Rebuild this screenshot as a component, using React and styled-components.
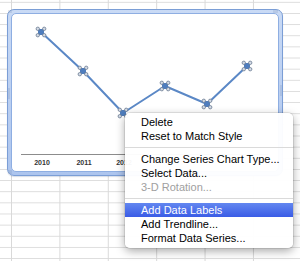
import React from "react";
import styled, { createGlobalStyle } from "styled-components";

const GlobalStyle = createGlobalStyle`
  html, body {
    margin: 0;
    padding: 0;
    background: #fff;
    overflow: hidden;
  }
  body {
    font-family: "Liberation Sans", Arial, sans-serif;
  }
`;

export const Sheet = styled.div`
  position: relative;
  width: 300px;
  height: 261px;
  box-sizing: border-box;
  padding: 9px 0 0 7px;
  overflow: hidden;
  background-color: #fff;
  background-image: linear-gradient(to right, #d9d9d9 1px, transparent 1px),
    linear-gradient(to bottom, #dcdcdc 1px, transparent 1px);
  background-size: 48.4px 100%, 100% 11.15px;
  background-position: 11px 0, 0 1.85px;
`;

export const ChartFrame = styled.div`
  position: relative;
  width: 276px;
  height: 167px;
  box-sizing: border-box;
  border: 1px solid #7b9ed6;
  border-radius: 7px;
  background: linear-gradient(to bottom, #c9daf5, #adc5ee);
  padding: 3px;
  box-shadow: 0 1px 1px rgba(60, 90, 140, 0.2);
`;

export const PlotArea = styled.div`
  width: 100%;
  height: 100%;
  box-sizing: border-box;
  border: 1px solid #8eaee2;
  border-radius: 5px;
  background: #fff;
  overflow: hidden;
`;

export const Grip = styled.span`
  position: absolute;
  left: ${(p) => p.$x}px;
  top: ${(p) => p.$y}px;
  width: ${(p) => p.$w}px;
  height: ${(p) => p.$h}px;
  background-image: radial-gradient(circle, #6a7fa3 0.55px, transparent 0.75px);
  background-size: 2px 2px;
  opacity: 0.85;
`;

export const Menu = styled.ul`
  position: absolute;
  left: 125px;
  top: 113px;
  width: 168px;
  box-sizing: border-box;
  margin: 0;
  padding: 2px 0 3px;
  list-style: none;
  background: rgba(255, 255, 255, 0.96);
  border-radius: 5px;
  box-shadow: 0 0 0 1px rgba(0, 0, 0, 0.08), 0 3px 10px rgba(0, 0, 0, 0.35);
`;

export const MenuItem = styled.li`
  height: 14px;
  line-height: 14px;
  padding-left: 16px;
  font-size: 11px;
  font-family: "Liberation Sans", Arial, sans-serif;
  white-space: nowrap;
  color: ${(p) => (p.$disabled ? "#a0a0a0" : p.$active ? "#fff" : "#000")};
  background: ${(p) =>
    p.$active ? "linear-gradient(to bottom, #6387f0, #3a5ce6)" : "transparent"};
`;

export const Separator = styled.li`
  height: 9px;
  display: flex;
  align-items: center;
  &::after {
    content: "";
    flex: 1;
    height: 1px;
    background: #dadada;
  }
`;

const points = [
  [41, 32],
  [83, 71],
  [123, 113],
  [165, 86],
  [207, 104],
  [247, 66],
];
// only the first three labels show; the rest sit under the context menu
const years = ["2010", "2011", "2012"];

const Marker = ({ x, y }) => (
  <g>
    <rect x={x - 3} y={y - 3} width="6" height="6" fill="#4f7dbd" />
    {[
      [-3.2, -3.2],
      [3.2, -3.2],
      [-3.2, 3.2],
      [3.2, 3.2],
    ].map(([dx, dy], i) => (
      <circle
        key={i}
        cx={x + dx}
        cy={y + dy}
        r="1.7"
        fill="#d3dbe6"
        stroke="#6b7b92"
        strokeWidth="0.8"
      />
    ))}
  </g>
);

const LineChart = () => (
  <svg width="100%" height="100%" viewBox="12 14 266 157" preserveAspectRatio="none">
    <line x1="21" y1="154.5" x2="268" y2="154.5" stroke="#8c8c8c" strokeWidth="1" />
    {years.map((y, i) => (
      <text
        key={y}
        x={points[i][0] + 1}
        y="165"
        textAnchor="middle"
        fontSize="7"
        fontWeight="bold"
        fill="#333"
        fontFamily="Liberation Sans, Arial, sans-serif"
      >
        {y}
      </text>
    ))}
    <polyline
      points={points.map((p) => p.join(",")).join(" ")}
      fill="none"
      stroke="#5b88c6"
      strokeWidth="2"
      strokeLinejoin="round"
    />
    {points.map(([x, y], i) => (
      <Marker key={i} x={x} y={y} />
    ))}
  </svg>
);

const menu = [
  { label: "Delete" },
  { label: "Reset to Match Style" },
  { sep: true },
  { label: "Change Series Chart Type..." },
  { label: "Select Data..." },
  { label: "3-D Rotation...", disabled: true },
  { sep: true },
  { label: "Add Data Labels", active: true },
  { label: "Add Trendline..." },
  { label: "Format Data Series..." },
];

export default function App() {
  return (
    <>
      <GlobalStyle />
      <Sheet>
        <ChartFrame>
          <PlotArea>
            <LineChart />
          </PlotArea>
          <Grip $x={0} $y={0} $w={4} $h={3} />
          <Grip $x={265} $y={0} $w={5} $h={3} />
          <Grip $x={0} $y={160} $w={4} $h={4} />
          <Grip $x={0} $y={78} $w={2} $h={11} />
          <Grip $x={272} $y={75} $w={2} $h={11} />
        </ChartFrame>
        <Menu>
          {menu.map((m, i) =>
            m.sep ? (
              <Separator key={i} />
            ) : (
              <MenuItem key={i} $disabled={m.disabled} $active={m.active}>
                {m.label}
              </MenuItem>
            )
          )}
        </Menu>
      </Sheet>
    </>
  );
}
